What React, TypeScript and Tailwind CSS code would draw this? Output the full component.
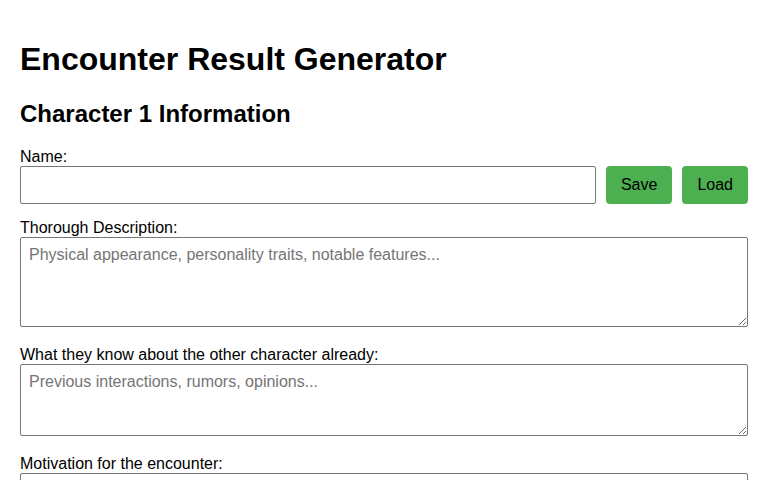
export default function App() {
  return (
    <div className="min-h-screen bg-white p-5 font-['Liberation_Sans',Arial,sans-serif] text-black">
      <h1 className="mt-[21px] mb-[22px] text-[32px] leading-[37px] font-bold">Encounter Result Generator</h1>
      <h2 className="mb-[20px] text-[24px] leading-[28px] font-bold">Character 1 Information</h2>

      <div className="mb-[15px]">
        <label className="block text-[16px] leading-[18px]">Name:</label>
        <div className="flex gap-[10px]">
          <input
            type="text"
            className="h-[38px] flex-1 rounded-[2px] border border-[#767676] px-2 text-[16px] outline-none"
          />
          <button className="rounded-[4px] bg-[#4CAF50] px-[15px] text-[16px] text-black">Save</button>
          <button className="rounded-[4px] bg-[#4CAF50] px-[15px] text-[16px] text-black">Load</button>
        </div>
      </div>

      <div className="mb-[19px]">
        <label className="block text-[16px] leading-[18px]">Thorough Description:</label>
        <textarea
          placeholder="Physical appearance, personality traits, notable features..."
          className="block h-[90px] w-full rounded-[2px] border border-[#767676] px-2 pt-[8px] pb-[7px] text-[16px] leading-[18px] outline-none placeholder:text-[#757575]"
        />
      </div>

      <div className="mb-[19px]">
        <label className="block text-[16px] leading-[18px]">What they know about the other character already:</label>
        <textarea
          placeholder="Previous interactions, rumors, opinions..."
          className="block h-[72px] w-full rounded-[2px] border border-[#767676] px-2 pt-[8px] pb-[7px] text-[16px] leading-[18px] outline-none placeholder:text-[#757575]"
        />
      </div>

      <div className="mb-[19px]">
        <label className="block text-[16px] leading-[18px]">Motivation for the encounter:</label>
        <textarea
          placeholder="What drives them to this encounter..."
          className="block h-[72px] w-full rounded-[2px] border border-[#767676] px-2 pt-[8px] pb-[7px] text-[16px] leading-[18px] outline-none placeholder:text-[#757575]"
        />
      </div>
    </div>
  )
}
